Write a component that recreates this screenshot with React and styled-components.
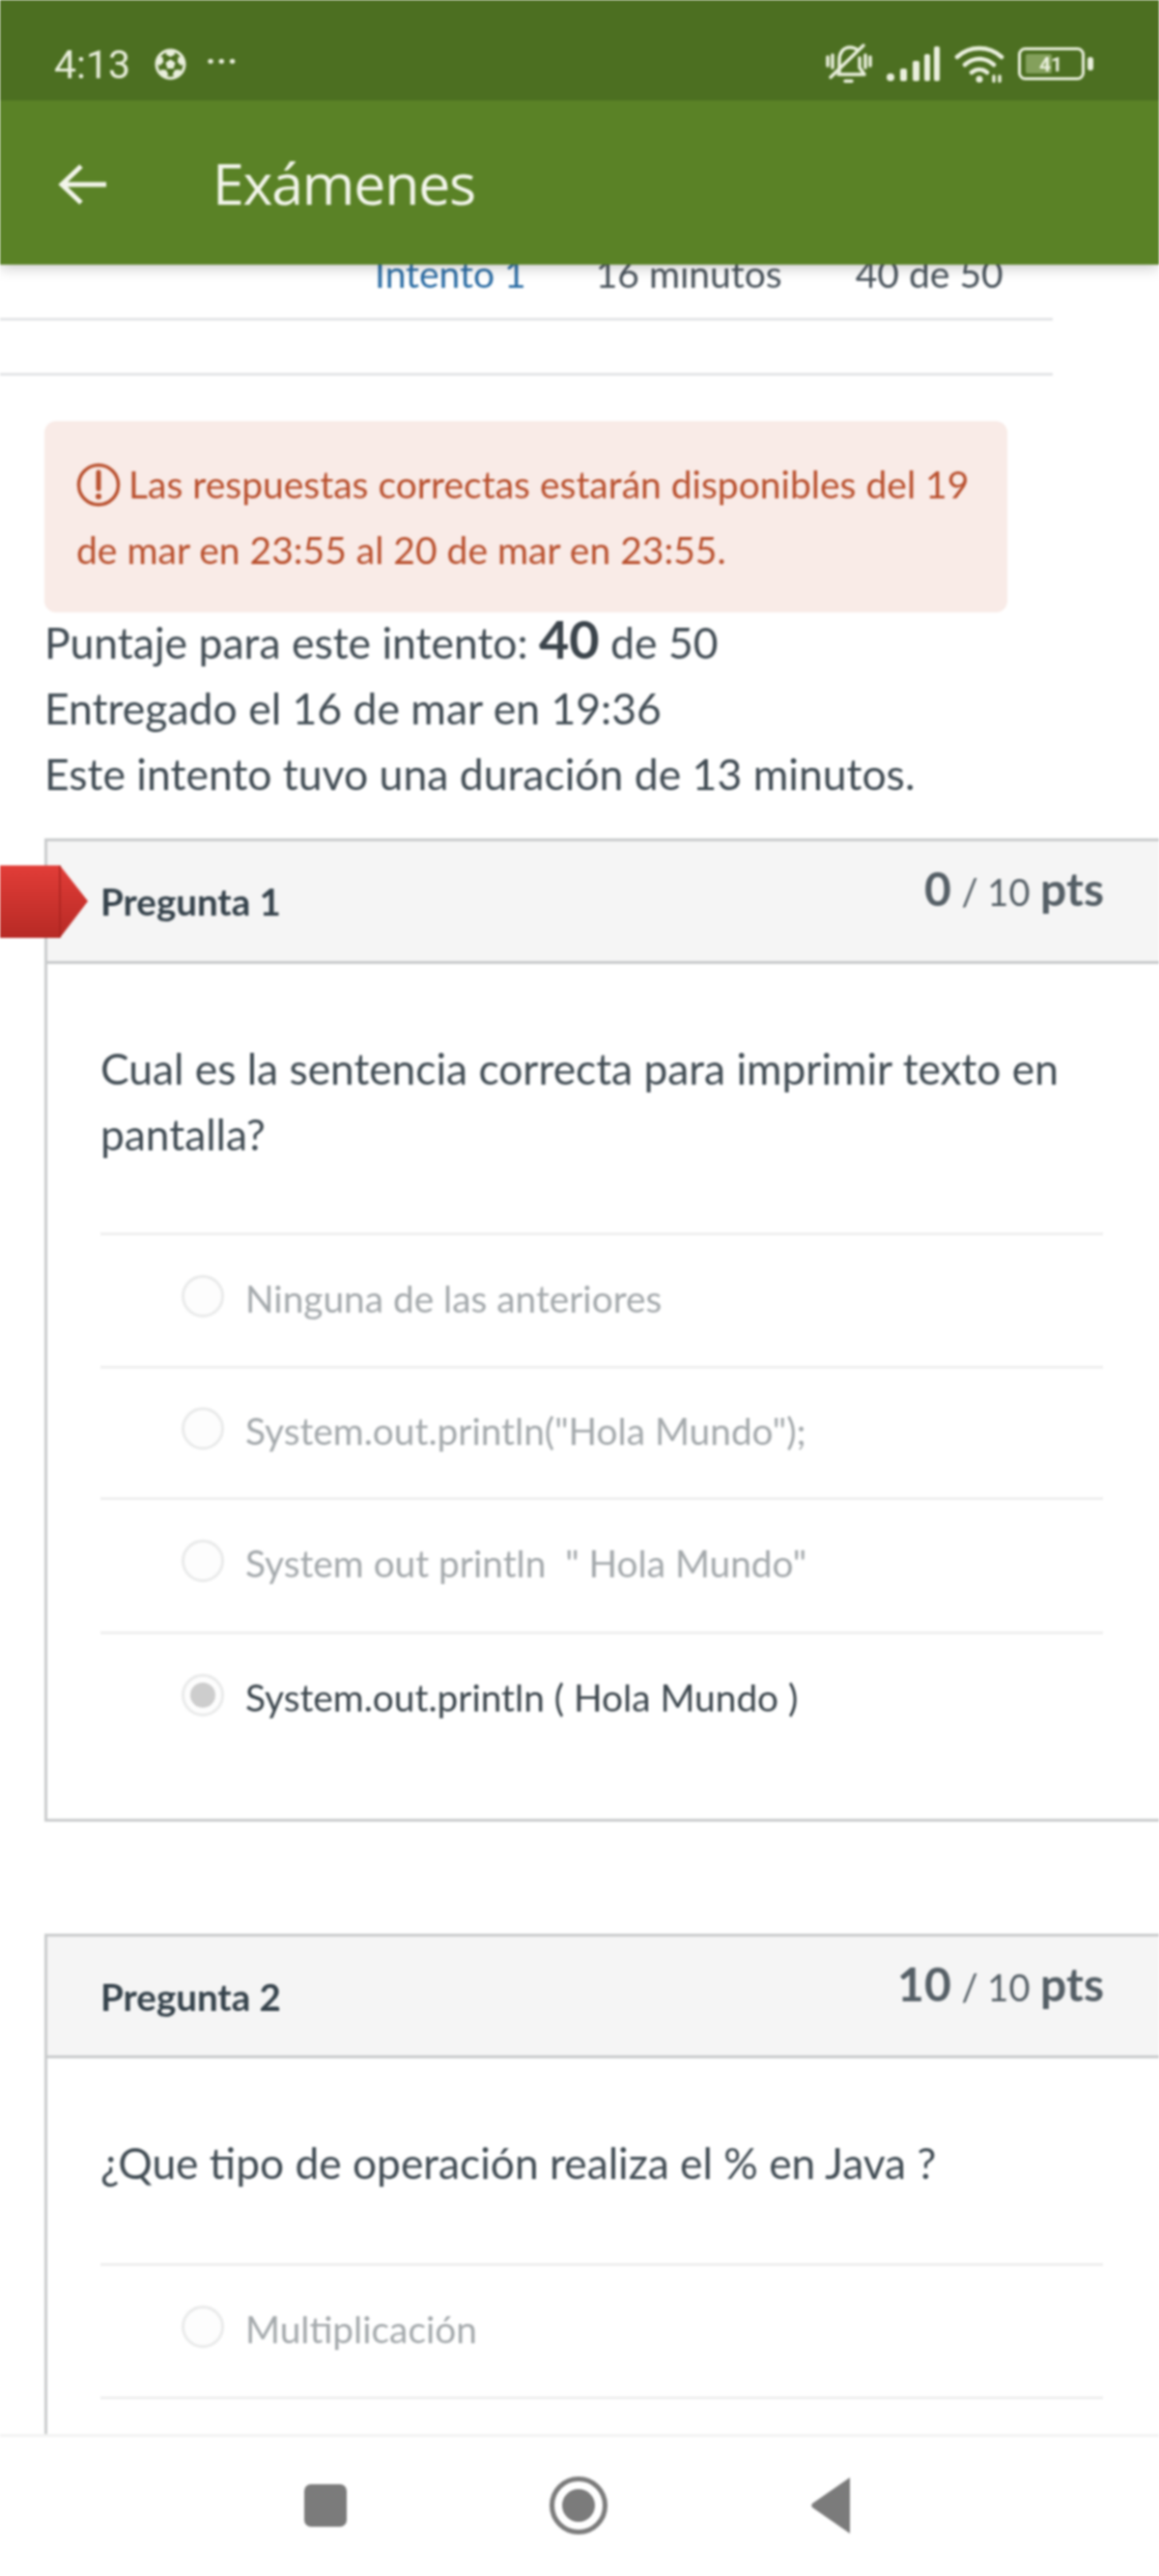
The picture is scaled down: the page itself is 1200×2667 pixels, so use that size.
import React from 'react';
import styled, { createGlobalStyle } from 'styled-components';
import { FaFutbol } from 'react-icons/fa';

const Global = createGlobalStyle`
  html, body { margin: 0; padding: 0; background: #fff; }
  * { box-sizing: border-box; }
`;
const Page = styled.div`
  width: 1200px; height: 2667px; display: flex; flex-direction: column; overflow: hidden;
  background: #fff; font-family: Lato, "Liberation Sans", sans-serif; color: #3d4a52; filter: blur(0.9px);
`;
const StatusBar = styled.div`
  height: 104px; flex: none; background: #4c6f21; color: #e9efdc; display: flex; align-items: center;
  padding: 29px 68px 0 56px; position: relative; z-index: 3;
`;
const Time = styled.span`font: 400 41px Roboto, sans-serif; width: 104px;`;
const Dots = styled.span`font: 700 34px Roboto, sans-serif; margin-left: 20px; letter-spacing: 1px; position: relative; top: -4px;`;
const StatusIcons = styled.div`margin-left: auto; display: flex; align-items: center; gap: 14px; position: relative; top: -1px;`;
const AppBar = styled.header`
  height: 170px; flex: none; background: #5a8226; color: #f2f5ea; display: flex; align-items: center;
  padding: 4px 0 0 60px; gap: 108px; position: relative; z-index: 2; box-shadow: 0 3px 14px rgba(0,0,0,.22);
`;
const Title = styled.h1`margin: 0; font: 400 59px "Open Sans", sans-serif; letter-spacing: -1.2px; position: relative; top: -2px;`;
const Content = styled.main`flex: 1; min-height: 0; overflow: hidden; padding-left: 46px;`;
const Peek = styled.div`
  height: 58px; margin: 0 110px 0 -46px; border-bottom: 3px solid #e4e5e7; overflow: hidden;
  display: flex; font-size: 39px; line-height: 44px;
`;
const PeekCell = styled.span`
  margin-top: -13px; margin-left: ${p => p.$l}px; color: ${p => p.$c || '#4a545c'}; white-space: nowrap;
`;
const Rule = styled.div`height: 57px; margin: 0 110px 0 -46px; border-bottom: 3px solid #e4e5e7;`;
const Alert = styled.div`
  width: 997px; height: 198px; margin-top: 47px; background: #f9ebe7; border-radius: 12px; color: #b9502e;
  padding: 31px 30px 0 33px; font-size: 39px; line-height: 68px;
`;
const AlertIcon = styled.svg`width: 46px; height: 46px; vertical-align: -9px; margin-right: 8px;`;
const Summary = styled.div`font-size: 44.5px; line-height: 68px; margin-top: -3px; color: #414c54;`;
const Score = styled.b`font-size: 54px; font-weight: 700; line-height: 40px; color: #3b444b;`;
const Card = styled.section`
  position: relative; margin-top: ${p => p.$top}px; margin-right: -4px; border: 3px solid #c9cbcc; ${p => p.$open ? 'border-bottom: 0;' : ''}
  height: ${p => p.$h ? `${p.$h}px` : 'auto'};
`;
const CardHead = styled.div`
  height: ${p => p.$h || 127}px; background: #f5f5f5; border-bottom: 3px solid #c9cbcc; padding: 0 58px 0 55px;
  display: flex; justify-content: space-between;
`;
const QLabel = styled.div`font-size: 38.5px; font-weight: 700; line-height: 44px; padding-top: 40px; color: #36434c;`;
const Pts = styled.div`font-size: 48px; font-weight: 700; line-height: 50px; padding-top: 24px; color: #555f66; white-space: nowrap;`;
const PtsSmall = styled.span`font-size: 38px; font-weight: 400; margin: 0 -1px;`;
const Flag = styled.svg`position: absolute; left: -49px; top: 25px; width: 91px; height: 75px;`;
const CardBody = styled.div`padding: ${p => p.$pt}px 59px 0 55px;`;
const Question = styled.p`margin: 0; font-size: 44.3px; line-height: 68px; color: #414c54; min-height: ${p => p.$h}px;`;
const Answer = styled.div`
  height: ${p => p.$h || 138}px; border-top: 3px solid #efefef; display: flex; align-items: center; gap: 22px; padding: 0 0 6px 84px;
  font-size: 38.8px; color: ${p => p.$on ? '#3c464d' : '#a4a9ac'}; white-space: pre;
`;
const Radio = styled.span`
  width: 44px; height: 44px; border-radius: 50%; flex: none; border: 3px solid #e9eaea; position: relative; top: -2px; background: #fdfdfd;
  display: flex; align-items: center; justify-content: center;
  &::after { content: ''; width: 26px; height: 26px; border-radius: 50%; background: ${p => p.$on ? '#cdcdcd' : 'transparent'}; }
`;
const NavBar = styled.nav`
  height: 147px; flex: none; background: #fff; border-top: 3px solid #f3f3f3; position: relative; z-index: 2;
  display: flex; align-items: center; padding: 0 0 3px 315px;
`;
const NavSquare = styled.span`width: 44px; height: 44px; border-radius: 7px; background: #7b7b7b; margin-right: 210px;`;
const NavHome = styled.span`
  width: 60px; height: 60px; border-radius: 50%; border: 5px solid #7b7b7b; display: flex; align-items: center; justify-content: center; margin-right: 210px;
  &::after { content: ''; width: 34px; height: 34px; border-radius: 50%; background: #7b7b7b; }
`;

const Bell = () => (
  <svg width="50" height="44" viewBox="0 0 50 44" fill="none" stroke="#e9efdc" strokeWidth="3.5" strokeLinecap="round" strokeLinejoin="round">
    <path d="M15 30V18c0-7 4-13 11-13 3 0 6 1 8 3M36 16v10l5 7H14M21 40h7" />
    <path d="M6 36 40 3" />
    <path d="M3 15v9M8 13v13M42 13v13M47 15v9" />
  </svg>
);
const Signal = () => (
  <svg width="56" height="36" viewBox="0 0 56 36" fill="#e9efdc">
    <circle cx="4" cy="32" r="4" />
    <rect x="14" y="23" width="7" height="13" rx="2" />
    <rect x="27" y="15" width="7" height="21" rx="2" />
    <rect x="39" y="8" width="6" height="28" rx="2" />
    <rect x="49" y="0" width="6" height="36" rx="2" />
  </svg>
);
const Wifi = () => (
  <svg width="52" height="40" viewBox="0 0 52 40" fill="none" stroke="#e9efdc" strokeWidth="4.5" strokeLinecap="round">
    <path d="M3 13C16 1 36 1 49 13M11 21c9-8 21-8 30 0M18 29c5-4 11-4 16 0" />
    <circle cx="26" cy="36" r="3.5" fill="#e9efdc" stroke="none" />
    <path d="M41 33v5M47 33v5" strokeWidth="3.5" />
  </svg>
);
const Battery = () => (
  <svg width="78" height="34" viewBox="0 0 78 34">
    <rect x="1.5" y="1.5" width="66" height="31" rx="6" fill="none" stroke="#e9efdc" strokeWidth="3" />
    <rect x="8" y="7" width="27" height="20" rx="2" fill="#84a05c" />
    <text x="34" y="25" textAnchor="middle" fill="#e9efdc" fontFamily="Roboto, sans-serif" fontWeight="700" fontSize="21">41</text>
    <rect x="72" y="10" width="6" height="14" rx="3" fill="#e9efdc" />
  </svg>
);

const AnswerRow = ({ text, on, h }) => (
  <Answer $on={on} $h={h}><Radio $on={on} />{text}</Answer>
);

export default function App() {
  return (
    <Page>
      <Global />
      <StatusBar>
        <Time>4:13</Time>
        <FaFutbol size={33} />
        <Dots>···</Dots>
        <StatusIcons><Bell /><Signal /><Wifi /><Battery /></StatusIcons>
      </StatusBar>
      <AppBar>
        <svg width="52" height="44" viewBox="0 0 52 44" fill="none" stroke="#f2f5ea" strokeWidth="5">
          <path d="M50 22H5M24 3 4 22l20 19" />
        </svg>
        <Title>Exámenes</Title>
      </AppBar>
      <Content>
        <Peek>
          <PeekCell $l={388} $c="#2d6ea5">Intento 1</PeekCell>
          <PeekCell $l={72}>16 minutos</PeekCell>
          <PeekCell $l={76}>40 de 50</PeekCell>
        </Peek>
        <Rule />
        <Alert>
          <AlertIcon viewBox="0 0 46 46">
            <circle cx="23" cy="23" r="20.5" fill="none" stroke="#b9502e" strokeWidth="3.5" />
            <path d="M23 10v17" stroke="#b9502e" strokeWidth="5" strokeLinecap="round" />
            <circle cx="23" cy="35" r="3" fill="#b9502e" />
          </AlertIcon>
          Las respuestas correctas estarán disponibles del 19 de mar en 23:55 al 20 de mar en 23:55.
        </Alert>
        <Summary>
          <div>Puntaje para este intento: <Score>40</Score> de 50</div>
          <div>Entregado el 16 de mar en 19:36</div>
          <div>Este intento tuvo una duración de 13 minutos.</div>
        </Summary>
        <Card $top={33} $h={1018}>
          <Flag viewBox="0 0 91 75">
            <defs>
              <linearGradient id="flag" x1="0" y1="0" x2="0" y2="1">
                <stop offset="0" stopColor="#e23d38" />
                <stop offset="1" stopColor="#b72a25" />
              </linearGradient>
            </defs>
            <path d="M0 0h62l29 37-29 38H0z" fill="url(#flag)" />
            <path d="M62 0v75" stroke="#a9231f" strokeWidth="1.5" />
          </Flag>
          <CardHead>
            <QLabel>Pregunta 1</QLabel>
            <Pts>0 <PtsSmall>/ 10</PtsSmall> pts</Pts>
          </CardHead>
          <CardBody $pt={74}>
            <Question $h={204}>Cual es la sentencia correcta para imprimir texto en pantalla?</Question>
            <AnswerRow text="Ninguna de las anteriores" />
            <AnswerRow text={'System.out.println("Hola Mundo");'} h={136} />
            <AnswerRow text={'System out println  " Hola Mundo"'} h={139} />
            <AnswerRow text="System.out.println ( Hola Mundo )" on />
          </CardBody>
        </Card>
        <Card $top={116} $open>
          <CardHead $h={126}>
            <QLabel>Pregunta 2</QLabel>
            <Pts>10 <PtsSmall>/ 10</PtsSmall> pts</Pts>
          </CardHead>
          <CardBody $pt={74}>
            <Question $h={138}>¿Que tipo de operación realiza el % en Java ?</Question>
            <AnswerRow text="Multiplicación" />
            <Answer />
          </CardBody>
        </Card>
      </Content>
      <NavBar>
        <NavSquare />
        <NavHome />
        <svg width="42" height="58" viewBox="0 0 42 58"><path d="M41 0v58L2 31a3 3 0 0 1 0-4z" fill="#7b7b7b" /></svg>
      </NavBar>
    </Page>
  );
}
